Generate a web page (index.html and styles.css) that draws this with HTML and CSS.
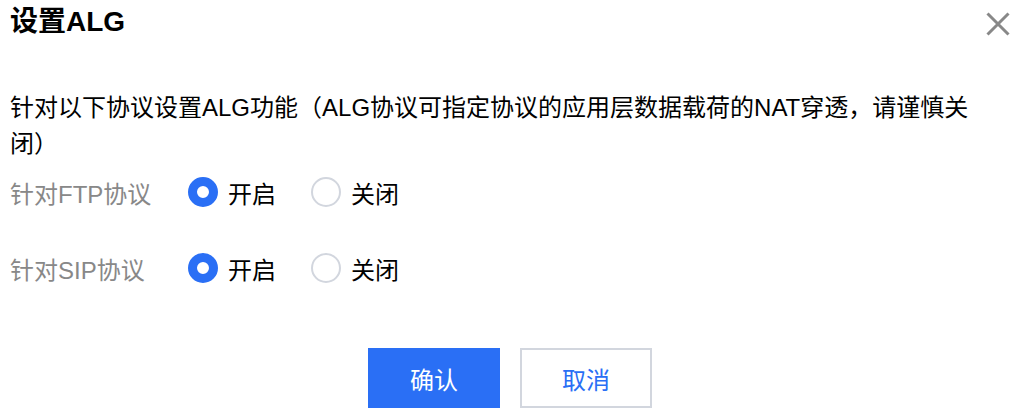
FILE: index.html
```html
<!DOCTYPE html>
<html lang="zh-CN">
<head>
    <meta charset="UTF-8">
    <title>设置ALG</title>
    <link rel="stylesheet" href="styles.css">
</head>
<body>
    <div class="dialog">
        <div class="dialog-header">
            <h3 class="dialog-title">设置ALG</h3>
            <span class="dialog-close">
                <svg width="24" height="24" viewBox="0 0 24 24">
                    <path d="M1.5 1.5 L22.5 22.5 M22.5 1.5 L1.5 22.5" stroke="#888" stroke-width="3" fill="none"/>
                </svg>
            </span>
        </div>
        <p class="dialog-desc">针对以下协议设置ALG功能（ALG协议可指定协议的应用层数据载荷的NAT穿透，请谨慎关闭）</p>
        <div class="form">
            <div class="form-row">
                <div class="form-label">针对FTP协议</div>
                <label class="radio"><span class="radio-dot checked"></span>开启</label>
                <label class="radio"><span class="radio-dot"></span>关闭</label>
            </div>
            <div class="form-row">
                <div class="form-label">针对SIP协议</div>
                <label class="radio"><span class="radio-dot checked"></span>开启</label>
                <label class="radio"><span class="radio-dot"></span>关闭</label>
            </div>
        </div>
        <div class="dialog-footer">
            <button class="btn btn-primary">确认</button>
            <button class="btn">取消</button>
        </div>
    </div>
</body>
</html>
```

FILE: styles.css
```css
body {
    margin: 0;
    background-color: #fff;
    font-family: "Liberation Sans", "Noto Sans CJK SC", sans-serif;
    color: #000;
}
.dialog {
    padding: 0 8px 0 10px;
}
.dialog-header {
    display: flex;
    justify-content: space-between;
    align-items: center;
    height: 44px;
}
.dialog-title {
    margin: 0;
    font-size: 28px;
    font-weight: bold;
    line-height: 44px;
}
.dialog-close {
    display: flex;
    padding-top: 4px;
    cursor: pointer;
}
.dialog-desc {
    margin: 46px 0 0;
    font-size: 24px;
    line-height: 36px;
    max-width: 970px;
}
.form {
    margin-top: 10px;
}
.form-row {
    display: flex;
    align-items: center;
    height: 40px;
    margin-bottom: 36px;
    font-size: 24px;
}
.form-label {
    width: 178px;
    color: #888;
}
.radio {
    display: flex;
    align-items: center;
    margin-right: 35px;
    cursor: pointer;
}
.radio-dot {
    box-sizing: border-box;
    width: 30px;
    height: 30px;
    margin-right: 10px;
    border: 2px solid #d2d6de;
    border-radius: 50%;
}
.radio-dot.checked {
    border: 9px solid #2a6ff5;
}
.dialog-footer {
    display: flex;
    justify-content: center;
    gap: 20px;
    margin-top: 60px;
}
.btn {
    box-sizing: border-box;
    width: 132px;
    height: 60px;
    border: 2px solid #d2d6de;
    background-color: #fff;
    color: #2a6ff5;
    font-family: "Liberation Sans", "Noto Sans CJK SC", sans-serif;
    font-size: 24px;
    cursor: pointer;
}
.btn-primary {
    border-color: #2a6ff5;
    background-color: #2a6ff5;
    color: #fff;
}
```
